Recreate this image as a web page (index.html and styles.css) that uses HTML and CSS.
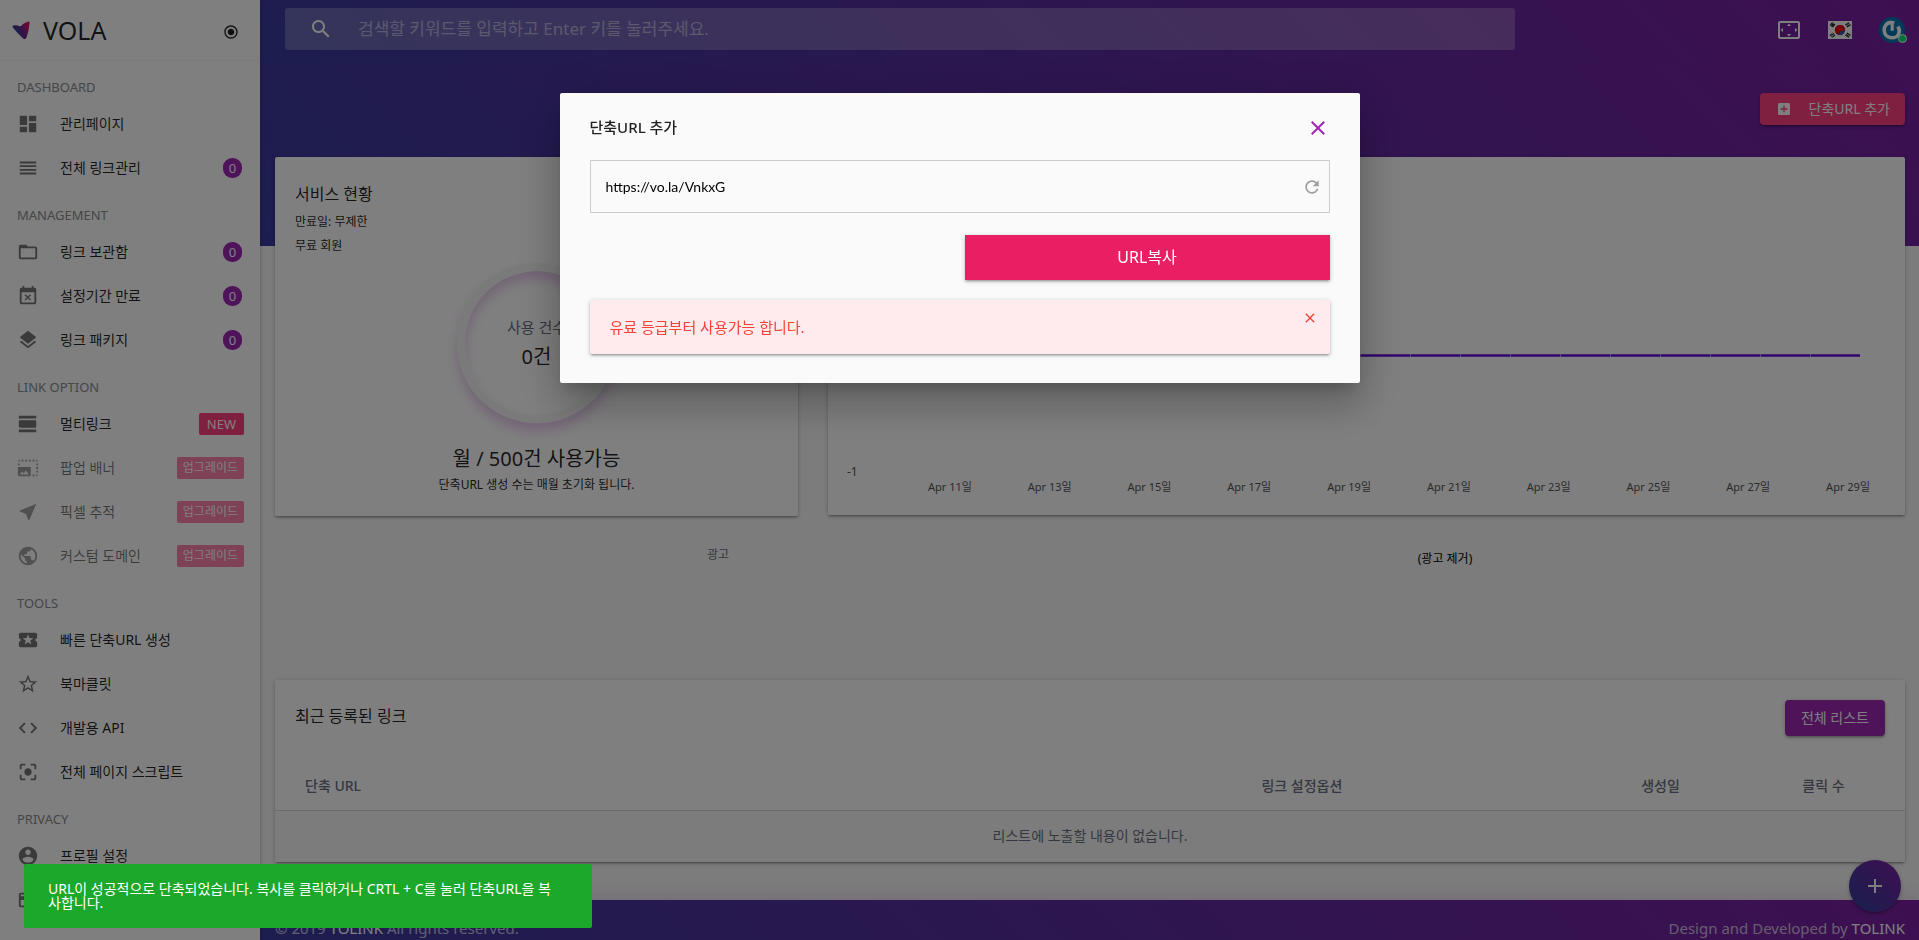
FILE: index.html
```html
<!DOCTYPE html>
<html lang="ko">
<head>
<meta charset="utf-8">
<title>VOLA</title>
<meta name="viewport" content="width=device-width, initial-scale=1">
<link rel="stylesheet" href="styles.css">
</head>
<body>
<div class="layout">
  <aside class="sidebar">
    <div class="brand">
      <a class="brand-link" href="#">
        <svg class="brand-logo" viewBox="0 0 18 19" aria-hidden="true">
          <defs><linearGradient id="logo" x1="0" y1=".6" x2="1" y2=".2"><stop offset="0" stop-color="#2a4a9c"/><stop offset=".5" stop-color="#5a2a90"/><stop offset="1" stop-color="#f0106a"/></linearGradient></defs>
          <path fill="url(#logo)" d="M1.2 4.6Q4 3.4 8.400 5.600Q12 1.600 16.200.6Q18 .4 17.500 2.600Q17 10 14.500 16.500Q13.500 19.200 11.200 17.400Q5 12 1 6.800Q-.2 5.200 1.200 4.600z"/>
        </svg>
        <span class="brand-name">VOLA</span>
      </a>
      <button class="brand-toggle" type="button" aria-label="메뉴 고정">
        <svg class="icon-sm" viewBox="0 0 24 24"><path d="M12 7c-2.760 0-5 2.240-5 5s2.240 5 5 5 5-2.240 5-5-2.240-5-5-5zm0-5C6.480 2 2 6.480 2 12s4.480 10 10 10 10-4.480 10-10S17.520 2 12 2zm0 18c-4.420 0-8-3.580-8-8s3.580-8 8-8 8 3.580 8 8-3.580 8-8 8z"/></svg>
      </button>
    </div>
    <nav class="menu">
      <h2 class="menu-title">DASHBOARD</h2>
      <a class="menu-item" href="#"><svg class="icon" viewBox="0 0 24 24"><path d="M3 13h8V3H3v10zm0 8h8v-6H3v6zm10 0h8V11h-8v10zm0-18v6h8V3h-8z"/></svg><span>관리페이지</span></a>
      <a class="menu-item" href="#"><svg class="icon" viewBox="0 0 24 24"><path d="M3 15h18v-2H3v2zm0 4h18v-2H3v2zm0-8h18V9H3v2zm0-6v2h18V5H3z"/></svg><span>전체 링크관리</span><span class="count">0</span></a>
      <h2 class="menu-title">MANAGEMENT</h2>
      <a class="menu-item" href="#"><svg class="icon" viewBox="0 0 24 24"><path d="M20 6h-8l-2-2H4c-1.100 0-1.990.9-1.990 2L2 18c0 1.100.9 2 2 2h16c1.100 0 2-.9 2-2V8c0-1.100-.9-2-2-2zm0 12H4V8h16v10z"/></svg><span>링크 보관함</span><span class="count">0</span></a>
      <a class="menu-item" href="#"><svg class="icon" viewBox="0 0 24 24"><path d="M9.310 17l2.440-2.440L14.190 17l1.060-1.060-2.440-2.440 2.440-2.440L14.190 10l-2.440 2.440L9.310 10l-1.060 1.060 2.440 2.440-2.440 2.440L9.310 17zM19 3h-1V1h-2v2H8V1H6v2H5c-1.110 0-1.990.9-1.990 2L3 19c0 1.100.89 2 2 2h14c1.100 0 2-.9 2-2V5c0-1.100-.9-2-2-2zm0 16H5V8h14v11z"/></svg><span>설정기간 만료</span><span class="count">0</span></a>
      <a class="menu-item" href="#"><svg class="icon" viewBox="0 0 24 24"><path d="M11.990 18.540l-7.370-5.730L3 14.070l9 7 9-7-1.630-1.270-7.380 5.740zM12 16l7.360-5.730L21 9l-9-7-9 7 1.630 1.270L12 16z"/></svg><span>링크 패키지</span><span class="count">0</span></a>
      <h2 class="menu-title">LINK OPTION</h2>
      <a class="menu-item" href="#"><svg class="icon" viewBox="0 0 24 24"><path d="M2 21h19v-3H2v3zM20 8H3c-.55 0-1 .45-1 1v6c0 .55.45 1 1 1h17c.55 0 1-.45 1-1V9c0-.55-.45-1-1-1zM2 3v3h19V3H2z"/></svg><span>멀티링크</span><span class="tag tag-new">NEW</span></a>
      <a class="menu-item locked" href="#"><svg class="icon" viewBox="0 0 24 24"><path d="M21 15h2v2h-2v-2zm0-4h2v2h-2v-2zm2 8h-2v2c1 0 2-1 2-2zM13 3h2v2h-2V3zm8 4h2v2h-2V7zm0-4v2h2c0-1-1-2-2-2zM1 7h2v2H1V7zm16-4h2v2h-2V3zm0 16h2v2h-2v-2zM3 3C2 3 1 4 1 5h2V3zm6 0h2v2H9V3zM5 3h2v2H5V3zm-4 8v8c0 1.100.9 2 2 2h12V11H1zm2 8l2.500-3.210 1.790 2.150 2.500-3.220L13 19H3z"/></svg><span>팝업 배너</span><span class="tag">업그레이드</span></a>
      <a class="menu-item locked" href="#"><svg class="icon" viewBox="0 0 24 24"><path d="M21 3L3 10.530v.98l6.840 2.650L12.480 21h.98L21 3z"/></svg><span>픽셀 추적</span><span class="tag">업그레이드</span></a>
      <a class="menu-item locked" href="#"><svg class="icon" viewBox="0 0 24 24"><path d="M12 2C6.480 2 2 6.480 2 12s4.480 10 10 10 10-4.480 10-10S17.520 2 12 2zm-1 17.930c-3.950-.49-7-3.850-7-7.930 0-.62.08-1.210.21-1.790L9 15v1c0 1.100.9 2 2 2v1.930zm6.900-2.540c-.26-.81-1-1.390-1.900-1.390h-1v-3c0-.55-.45-1-1-1H8v-2h2c.55 0 1-.45 1-1V7h2c1.100 0 2-.9 2-2v-.41c2.930 1.190 5 4.060 5 7.410 0 2.080-.8 3.970-2.100 5.390z"/></svg><span>커스텀 도메인</span><span class="tag">업그레이드</span></a>
      <h2 class="menu-title">TOOLS</h2>
      <a class="menu-item" href="#"><svg class="icon" viewBox="0 0 24 24"><path d="M20 12c0-1.100.9-2 2-2V6c0-1.100-.9-2-2-2H4c-1.100 0-1.990.9-1.990 2v4c1.100 0 1.990.9 1.990 2s-.89 2-2 2v4c0 1.100.9 2 2 2h16c1.100 0 2-.9 2-2v-4c-1.100 0-2-.9-2-2zm-4.420 4.800L12 14.500l-3.580 2.300 1.080-4.120-3.290-2.690 4.240-.25L12 5.800l1.540 3.950 4.240.25-3.290 2.690 1.090 4.110z"/></svg><span>빠른 단축URL 생성</span></a>
      <a class="menu-item" href="#"><svg class="icon" viewBox="0 0 24 24"><path d="M22 9.240l-7.190-.62L12 2 9.190 8.630 2 9.240l5.460 4.730L5.820 21 12 17.270 18.180 21l-1.630-7.030L22 9.240zM12 15.400l-3.760 2.270 1-4.280-3.320-2.880 4.380-.38L12 6.100l1.710 4.040 4.380.38-3.320 2.880 1 4.280L12 15.400z"/></svg><span>북마클릿</span></a>
      <a class="menu-item" href="#"><svg class="icon" viewBox="0 0 24 24"><path d="M9.400 16.600L4.800 12l4.600-4.600L8 6l-6 6 6 6 1.400-1.400zm5.200 0l4.600-4.600-4.600-4.600L16 6l6 6-6 6-1.400-1.400z"/></svg><span>개발용 API</span></a>
      <a class="menu-item" href="#"><svg class="icon" viewBox="0 0 24 24"><path d="M12 8c-2.210 0-4 1.790-4 4s1.790 4 4 4 4-1.790 4-4-1.790-4-4-4zm-7 7H3v4c0 1.100.9 2 2 2h4v-2H5v-4zM5 5h4V3H5c-1.100 0-2 .9-2 2v4h2V5zm14-2h-4v2h4v4h2V5c0-1.100-.9-2-2-2zm0 16h-4v2h4c1.100 0 2-.9 2-2v-4h-2v4z"/></svg><span>전체 페이지 스크립트</span></a>
      <h2 class="menu-title">PRIVACY</h2>
      <a class="menu-item" href="#"><svg class="icon" viewBox="0 0 24 24"><path d="M12 2C6.480 2 2 6.480 2 12s4.480 10 10 10 10-4.480 10-10S17.520 2 12 2zm0 3c1.660 0 3 1.340 3 3s-1.340 3-3 3-3-1.340-3-3 1.340-3 3-3zm0 14.200c-2.500 0-4.710-1.280-6-3.220.03-1.990 4-3.080 6-3.080 1.990 0 5.970 1.090 6 3.080-1.290 1.940-3.500 3.220-6 3.220z"/></svg><span>프로필 설정</span></a>
      <a class="menu-item" href="#" aria-label="결제"><svg class="icon" viewBox="0 0 24 24"><path d="M20 4H4c-1.110 0-1.990.89-1.990 2L2 18c0 1.110.89 2 2 2h16c1.110 0 2-.89 2-2V6c0-1.110-.89-2-2-2zm0 14H4v-6h16v6zm0-10H4V6h16v2z"/></svg></a>
    </nav>
  </aside>

  <div class="page">
    <header class="topbar">
      <label class="search">
        <svg class="icon-lg" viewBox="0 0 24 24" aria-hidden="true"><path d="M15.500 14h-.79l-.28-.27C15.410 12.590 16 11.110 16 9.500 16 5.910 13.090 3 9.500 3S3 5.910 3 9.500 5.910 16 9.500 16c1.610 0 3.090-.59 4.230-1.570l.27.28v.79l5 4.990L20.490 19l-4.990-5zm-6 0C7.010 14 5 11.990 5 9.500S7.010 5 9.500 5 14 7.010 14 9.500 11.990 14 9.500 14z"/></svg>
        <input class="search-input" type="text" aria-label="검색" placeholder="검색할 키워드를 입력하고 Enter 키를 눌러주세요.">
      </label>
      <div class="top-actions">
        <button class="plain" type="button" aria-label="전체 화면"><svg class="icon-lg" viewBox="0 0 24 24"><path d="M12.010 5.500L10 8h4l-1.990-2.500zM18 10v4l2.500-1.990L18 10zM6 10l-2.500 2.010L6 14v-4zm8 6h-4l2.010 2.500L14 16zm7-13H3c-1.100 0-2 .9-2 2v14c0 1.100.9 2 2 2h18c1.100 0 2-.9 2-2V5c0-1.100-.9-2-2-2zm0 16.010H3V4.990h18v14.020z"/></svg></button>
        <button class="plain" type="button" aria-label="한국어">
          <svg class="flag" viewBox="0 0 24 18"><path fill="#fff" d="M0 0h24v18H0z"/><g stroke="#000" stroke-width="1.100"><path d="M2 4.500l2.500-3M3.200 5.300l2.500-3M4.400 6.100l2.500-3M17.500 3.200l2.500 3M18.800 2.400l2.500 3M20 1.500l2.500 3M2 13.500l2.500 3M3.200 12.700l2.500 3M4.400 11.900l2.500 3M17.500 14.800l2.500-3M18.800 15.600l2.500-3M20 16.500l2.500-3"/></g><g stroke="#fff" stroke-width=".7"><path d="M3.300 12.900l2-.8M2.500 16l4-3M18 12.500l4 3M18 5l4-2.500"/></g><circle cx="12" cy="9" r="5.200" fill="#3c5aa8"/><path fill="#f00000" d="M7.500 11.600A5.200 5.200 0 0 1 16.500 6.400A2.600 2.600 0 0 1 12 9A2.600 2.600 0 0 1 7.500 11.600z"/></svg>
        </button>
        <button class="plain avatar" type="button" aria-label="내 계정">
          <svg class="avatar-img" viewBox="0 0 26 26"><circle cx="13" cy="13" r="13" fill="#0074b0"/><path fill="none" stroke="#fff" stroke-width="3.600" d="M12.500 5.400C2.600 5.500 2.800 20.800 13 20.800C20 20.800 22 14 18.800 9.500"/><path fill="none" stroke="#fff" stroke-width="3.200" d="M13.200 4v9.800"/><path fill="none" stroke="#fff" stroke-width="2.400" d="M12.500 5.200h3"/></svg>
          <span class="online"></span>
        </button>
      </div>
    </header>

    <main class="content">
      <div class="actions"><a class="btn btn-add" href="#"><svg class="icon-sm" viewBox="0 0 24 24"><path d="M19 3H5c-1.110 0-2 .9-2 2v14c0 1.100.89 2 2 2h14c1.100 0 2-.9 2-2V5c0-1.100-.9-2-2-2zm-2 10h-4v4h-2v-4H7v-2h4V7h2v4h4v2z"/></svg>단축URL 추가</a></div>

      <div class="cards">
        <section class="card status">
          <h3 class="card-title">서비스 현황</h3>
          <p class="small">만료일: 무제한</p>
          <p class="small">무료 회원</p>
          <div class="ring"><span class="ring-label">사용 건수</span><span class="ring-value">0건</span></div>
          <p class="quota">월 / 500건 사용가능</p>
          <p class="note">단축URL 생성 수는 매월 초기화 됩니다.</p>
        </section>
        <section class="card chart">
          <div class="chart-line"></div>
          <div class="chart-min">-1</div>
          <div class="chart-days"><span>Apr 11일</span><span>Apr 13일</span><span>Apr 15일</span><span>Apr 17일</span><span>Apr 19일</span><span>Apr 21일</span><span>Apr 23일</span><span>Apr 25일</span><span>Apr 27일</span><span>Apr 29일</span></div>
        </section>
      </div>

      <div class="ads"><span class="ad-label">광고</span><a class="ad-remove" href="#">(광고 제거)</a></div>

      <section class="card links">
        <div class="links-head"><h3 class="card-title">최근 등록된 링크</h3><a class="btn btn-list" href="#">전체 리스트</a></div>
        <table class="table">
          <thead><tr><th class="col-url">단축 URL</th><th class="col-option">링크 설정옵션</th><th class="col-date">생성일</th><th class="col-click">클릭 수</th></tr></thead>
          <tbody><tr><td colspan="4">리스트에 노출할 내용이 없습니다.</td></tr></tbody>
        </table>
      </section>
    </main>

    <footer class="footer"><span>© 2019 <a href="#">TOLINK</a> All rights reserved.</span><span>Design and Developed by <a href="#">TOLINK</a></span></footer>
  </div>
</div>

<button class="fab" type="button" aria-label="추가"><svg class="icon-lg" viewBox="0 0 24 24"><path d="M19 13h-6v6h-2v-6H5v-2h6V5h2v6h6v2z"/></svg></button>

<div class="overlay"></div>
<div class="modal" role="dialog" aria-modal="true" aria-labelledby="modal-title">
  <div class="modal-head">
    <h2 class="modal-title" id="modal-title">단축URL 추가</h2>
    <button class="plain modal-close" type="button" aria-label="닫기"><svg class="icon-lg" viewBox="0 0 24 24"><path d="M19 6.410L17.590 5 12 10.590 6.410 5 5 6.410 10.590 12 5 17.590 6.410 19 12 13.410 17.590 19 19 17.590 13.410 12z"/></svg></button>
  </div>
  <div class="url-field">
    <input class="url-input" type="text" aria-label="단축 URL" value="https://vo.la/VnkxG">
    <button class="plain refresh" type="button" aria-label="새로고침"><svg class="icon-md" viewBox="0 0 24 24"><path d="M17.650 6.350C16.200 4.900 14.210 4 12 4c-4.420 0-7.990 3.580-7.990 8s3.570 8 7.990 8c3.730 0 6.840-2.550 7.730-6h-2.080c-.82 2.330-3.040 4-5.650 4-3.310 0-6-2.690-6-6s2.690-6 6-6c1.660 0 3.140.69 4.220 1.780L13 11h7V4l-2.350 2.350z"/></svg></button>
  </div>
  <div class="copy-row"><button class="copy" type="button">URL복사</button></div>
  <div class="alert" role="alert">
    <p class="alert-text">유료 등급부터 사용가능 합니다.</p>
    <button class="plain alert-close" type="button" aria-label="알림 닫기"><svg class="icon-sm" viewBox="0 0 24 24"><path d="M19 6.410L17.590 5 12 10.590 6.410 5 5 6.410 10.590 12 5 17.590 6.410 19 12 13.410 17.590 19 19 17.590 13.410 12z"/></svg></button>
  </div>
</div>

<div class="toast" role="status">URL이 성공적으로 단축되었습니다. 복사를 클릭하거나 CRTL + C를 눌러 단축URL을 복사합니다.</div>
</body>
</html>
```
FILE: styles.css
```css
* { box-sizing: border-box; }

:root {
  --sidebar: 260px;
  --brand: linear-gradient(45deg, #303f9f, #7b1fa2);
  --shadow: 0 2px 2px rgba(0, 0, 0, .14), 0 3px 1px -2px rgba(0, 0, 0, .12), 0 1px 5px rgba(0, 0, 0, .2);
}

body {
  margin: 0;
  height: 100vh;
  overflow: hidden;
  background: #f9f9f9;
  color: rgba(0, 0, 0, .87);
  font: 14px/20px "Noto Sans", "Noto Sans CJK KR", sans-serif;
}

h2, h3, p { margin: 0; font-weight: 400; }
a { color: inherit; text-decoration: none; }
svg { display: block; flex: none; fill: currentColor; }
button, input { font: inherit; color: inherit; }

.icon { width: 22px; height: 22px; color: #757575; }
.icon-sm { width: 16px; height: 16px; }
.icon-md { width: 20px; height: 20px; }
.icon-lg { width: 24px; height: 24px; }
.plain { display: flex; padding: 0; border: 0; background: none; }

.layout {
  display: flex;
  height: 100vh;
  background: var(--brand) 0 0 / 100% 246px no-repeat;
}

/* sidebar */
.sidebar {
  position: relative;
  z-index: 1;
  flex: none;
  width: var(--sidebar);
  overflow: hidden;
  background: #fff;
  box-shadow: var(--shadow);
}
.brand {
  display: flex;
  align-items: center;
  justify-content: space-between;
  height: 61px;
  padding: 0 21px 0 12px;
  border-bottom: 1px solid #f5f5f5;
}
.brand-link { display: flex; align-items: center; gap: 13px; }
.brand-logo { width: 18px; height: 19px; }
.brand-name { font-size: 25px; line-height: 60px; }
.brand-toggle { display: flex; margin-top: 4px; padding: 0; border: 0; background: none; }
.menu { padding-top: 1px; }
.menu-title {
  height: 40px;
  padding: 10px 17px 0;
  color: #8c8c8c;
  font-size: 13px;
  line-height: 30px;
}
.menu-item {
  display: flex;
  align-items: center;
  height: 44px;
  padding: 0 16px 0 17px;
}
.menu-item .icon { margin-right: 21px; }
.menu-item.locked { color: rgba(0, 0, 0, .55); }
.menu-item.locked .icon { color: #a0a0a0; }
.count {
  width: 19px;
  margin: 0 2px 0 auto;
  border-radius: 9px;
  background: #9c27b0;
  color: #fff;
  font-size: 13px;
  text-align: center;
}
.tag {
  margin-left: auto;
  padding: 0 6px;
  border-radius: 2px;
  background: #ff4081;
  color: #fff;
  font-size: 12px;
  line-height: 22px;
}
.tag-new { padding: 0 8px; font-size: 13px; }
.locked .tag { opacity: .65; }

/* page */
.page { display: flex; flex: 1; flex-direction: column; min-width: 0; }
.topbar {
  display: flex;
  flex: none;
  align-items: flex-start;
  justify-content: space-between;
  height: 64px;
  padding: 8px 14px 0 25px;
  background: var(--brand) right / calc(100% + var(--sidebar)) 100%;
}
.search {
  display: flex;
  align-items: center;
  gap: 25px;
  flex: 0 1 1230px;
  height: 42px;
  padding: 0 24px;
  border-radius: 3px;
  background: rgba(255, 255, 255, .24);
  color: #fff;
}
.search-input {
  flex: 1;
  min-width: 0;
  padding: 0;
  border: 0;
  outline: 0;
  background: none;
  font-size: 17px;
}
.search-input::placeholder { color: rgba(255, 255, 255, .5); }
.top-actions { display: flex; align-items: center; gap: 27px; height: 43px; color: #fff; }
.flag { width: 24px; height: 18px; }
.avatar { position: relative; }
.avatar-img { width: 26px; height: 26px; }
.online {
  position: absolute;
  right: -2px;
  bottom: 0;
  width: 9px;
  height: 9px;
  border: 1px solid #fff;
  border-radius: 50%;
  background: #00e676;
}
.content { flex: none; padding: 29px 14px 0 15px; }
.actions { display: flex; justify-content: flex-end; margin-bottom: 32px; }
.btn {
  display: flex;
  align-items: center;
  border-radius: 4px;
  box-shadow: var(--shadow);
  color: #fff;
}
.btn-add { gap: 17px; height: 32px; padding: 0 15px 0 16px; background: #ff4081; }
.btn-list { height: 36px; padding: 0 16px; background: #9c27b0; }

.cards { display: grid; grid-template-columns: 523fr 1077fr; gap: 30px; }
.card { border-radius: 2px; background: #fff; box-shadow: var(--shadow); }
.card-title { font-size: 16px; line-height: 32px; }
.status { display: flex; flex-direction: column; height: 359px; padding: 21px 20px 20px; }
.small { font-size: 12px; line-height: 24px; }
.ring {
  display: flex;
  flex-direction: column;
  align-items: center;
  justify-content: center;
  align-self: center;
  gap: 4px;
  width: 160px;
  height: 160px;
  margin-top: 5px;
  border: 8px solid #f5f5f5;
  border-radius: 50%;
  box-shadow: 0 8px 12px rgba(156, 39, 176, .25), inset 0 8px 12px rgba(156, 39, 176, .25);
}
.ring-label { color: #6b6f82; font-size: 15px; line-height: 24px; }
.ring-value { font-size: 20px; line-height: 28px; }
.quota { margin-top: 18px; font-size: 20px; line-height: 36px; text-align: center; }
.note { font-size: 12px; line-height: 16px; text-align: center; }

.chart { display: flex; flex-direction: column; height: 358px; padding-top: 197px; }
.chart-line {
  height: 3px;
  margin: 0 45px 0 71px;
  background:
    repeating-linear-gradient(270deg, transparent 0 49px, #b9a0dd 49px 50px),
    linear-gradient(#9b70d8, #6200ea 50%, #9b70d8);
}
.chart-min { margin: 105px 0 0 19px; font-size: 12px; line-height: 20px; color: #555; }
.chart-days {
  display: flex;
  margin: -4px 7px 0 72px;
  color: #555;
  font-size: 11px;
  line-height: 18px;
  text-align: center;
}
.chart-days span { flex: 1; }

.ads {
  display: grid;
  grid-template-columns: 886fr 568fr 176fr;
  height: 164px;
  padding-top: 29px;
  font-size: 12px;
  text-align: center;
}
.ad-label { color: #6b6f82; }
.ad-remove { padding-top: 4px; color: #000; }

.links-head { display: flex; align-items: flex-start; justify-content: space-between; padding: 20px 20px 26px; }
.table { width: 100%; border-collapse: collapse; color: #6b6f82; table-layout: fixed; }
.table th { height: 48px; padding: 0; border-bottom: 1px solid #d8d8d8; font-weight: 500; }
.table .col-url { padding-left: 30px; text-align: left; }
.col-option { width: 34%; }
.col-date { width: 10%; }
.col-click { width: 10%; }
.table td { height: 52px; padding: 0; background: #f9f9f9; text-align: center; }

.footer {
  display: flex;
  align-items: center;
  justify-content: space-between;
  flex: none;
  height: 56px;
  margin-top: 38px;
  padding: 0 14px 0 15px;
  background: var(--brand) right / calc(100% + var(--sidebar)) 100%;
  box-shadow: 0 0 20px rgba(123, 31, 162, .2);
  color: rgba(255, 255, 255, .7);
  font-size: 15px;
}
.footer a { color: #fff; }

.fab {
  position: fixed;
  right: 18px;
  bottom: 28px;
  z-index: 2;
  display: flex;
  align-items: center;
  justify-content: center;
  width: 52px;
  height: 52px;
  padding: 0;
  border: 0;
  border-radius: 50%;
  background: var(--brand);
  box-shadow: var(--shadow);
  color: #fff;
}

/* dialog */
.overlay { position: fixed; inset: 0; z-index: 3; background: rgba(0, 0, 0, .5); }
.modal {
  position: fixed;
  top: 93px;
  right: 0;
  left: 0;
  z-index: 4;
  width: 90%;
  max-width: 800px;
  margin: 0 auto;
  padding: 23px 30px 29px;
  border-radius: 2px;
  background: #fafafa;
  box-shadow: 0 24px 38px 3px rgba(0, 0, 0, .14), 0 9px 46px 8px rgba(0, 0, 0, .12), 0 11px 15px -7px rgba(0, 0, 0, .2);
}
.modal-head { display: flex; align-items: flex-start; justify-content: space-between; height: 24px; margin-bottom: 20px; }
.modal-title { font-size: 15px; font-weight: 500; line-height: 22px; }
.modal-close { color: #9c27b0; }
.url-field {
  display: flex;
  align-items: center;
  height: 53px;
  margin-bottom: 22px;
  padding: 0 7px 0 15px;
  border: 1px solid #ccc;
}
.url-input {
  flex: 1;
  min-width: 0;
  padding: 0;
  border: 0;
  outline: 0;
  background: none;
  color: #000;
  font-family: Lato, "Noto Sans", sans-serif;
}
.refresh { color: #9e9e9e; }
.copy-row { display: flex; justify-content: flex-end; margin-bottom: 20px; }
.copy {
  width: 365px;
  height: 45px;
  padding: 0 0 2px;
  border: 0;
  background: #e91e63;
  box-shadow: var(--shadow);
  color: #fff;
  font-size: 16px;
}
.alert {
  display: flex;
  align-items: flex-start;
  justify-content: space-between;
  height: 54px;
  padding: 10px 12px 0 20px;
  border-radius: 2px;
  background: #ffebee;
  box-shadow: var(--shadow);
  color: #f44336;
}
.alert-text { font-size: 15px; line-height: 34px; }

.toast {
  position: fixed;
  bottom: 12px;
  left: 24px;
  z-index: 5;
  width: 568px;
  padding: 18px 32px 18px 24px;
  border-radius: 2px;
  background: #1ba82b;
  color: #fff;
  line-height: 14px;
  word-break: break-all;
}
```
